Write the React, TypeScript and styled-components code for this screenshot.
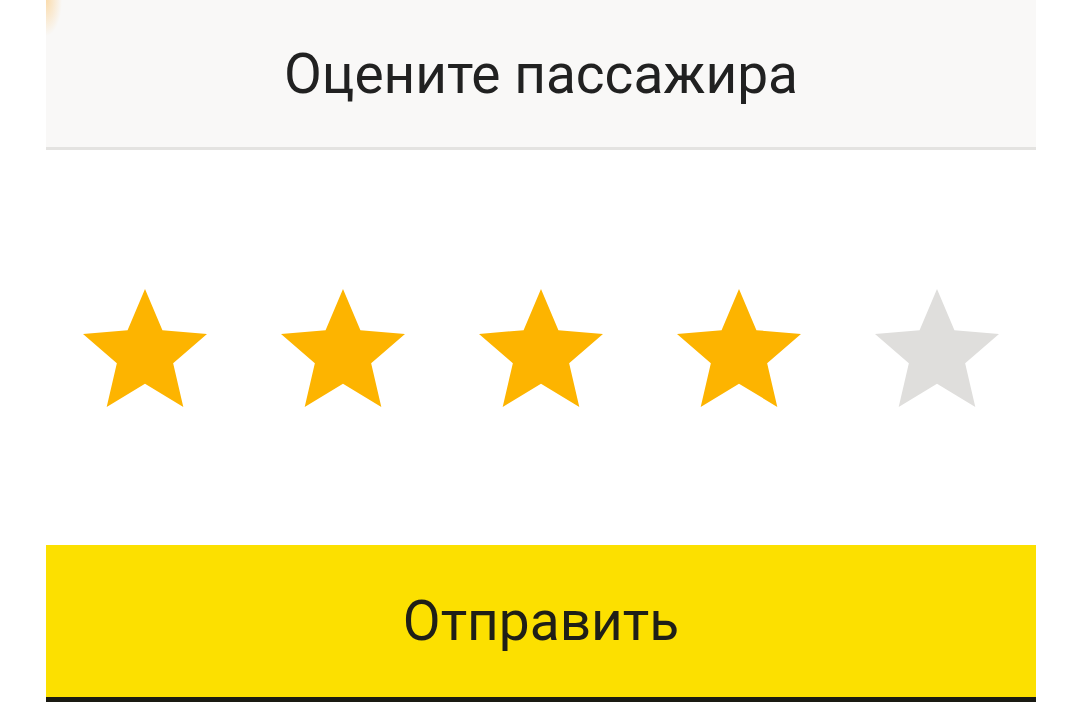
import React, { useState } from 'react';
import styled, { createGlobalStyle } from 'styled-components';

const GlobalStyle = createGlobalStyle`
  html, body {
    margin: 0;
    padding: 0;
    background: #fff;
    font-family: Roboto, 'Noto Sans', Arial, sans-serif;
  }
`;

const Page = styled('div')`
  width: 1080px;
  height: 702px;
  overflow: hidden;
  display: flex;
  justify-content: flex-start;
  padding-left: 46px;
  box-sizing: border-box;
`;

const Card = styled('div')`
  width: 990px;
  display: flex;
  flex-direction: column;
  background: #fff;
`;

const Header = styled('div')`
  height: 146px;
  background:
    radial-gradient(ellipse 16px 36px at 0 0, rgba(252, 196, 110, 0.55), rgba(252, 196, 110, 0)),
    #f9f8f7;
  border-bottom: 3px solid #e4e3e1;
  display: flex;
  align-items: center;
  justify-content: center;
  font-size: 55px;
  color: #212121;
  padding-top: 1px;
  box-sizing: content-box;
`;

const Stars = styled('div')`
  height: 396px;
  display: flex;
  align-items: center;
  justify-content: space-between;
  padding: 0 37px;
  box-sizing: border-box;
`;

const StarButton = styled('button')<{ $on: boolean }>`
  border: 0;
  padding: 0;
  background: none;
  cursor: pointer;
  width: 124px;
  height: 118px;
  color: ${(p) => (p.$on ? '#fdb400' : '#dfdedc')};
  display: flex;

  svg {
    width: 124px;
    height: 118px;
    display: block;
  }
`;

const Submit = styled('button')`
  height: 152px;
  border: 0;
  border-bottom: 5px solid #1a1a12;
  background: #fce000;
  font-family: Roboto, 'Noto Sans', Arial, sans-serif;
  font-size: 55px;
  color: #1f1f17;
  display: flex;
  align-items: center;
  justify-content: center;
  padding: 0 0 0;
  cursor: pointer;
  box-sizing: content-box;
`;

function Star() {
  return (
    <svg viewBox="2 2 20 19">
      <path
        fill="currentColor"
        d="M12 17.27 18.18 21l-1.64-7.03L22 9.24l-7.19-.61L12 2 9.19 8.63 2 9.24l5.46 4.73L5.82 21z"
      />
    </svg>
  );
}

export default function App() {
  const [rating, setRating] = useState(4);

  return (
    <Page>
      <GlobalStyle />
      <Card>
        <Header>Оцените пассажира</Header>
        <Stars>
          {[1, 2, 3, 4, 5].map((n) => (
            <StarButton key={n} $on={n <= rating} onClick={() => setRating(n)} aria-label={`${n}`}>
              <Star />
            </StarButton>
          ))}
        </Stars>
        <Submit>Отправить</Submit>
      </Card>
    </Page>
  );
}
